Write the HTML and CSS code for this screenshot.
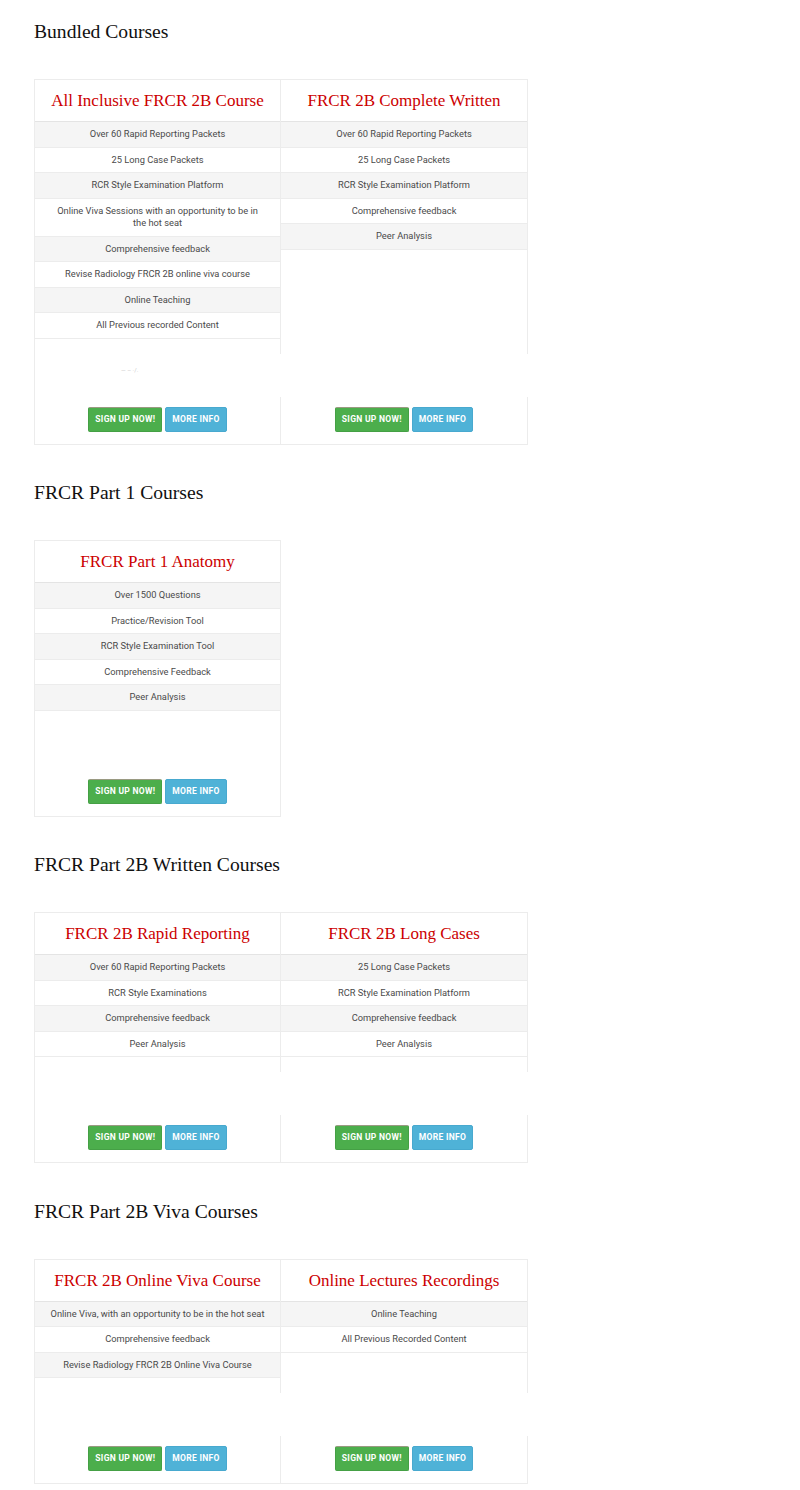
FILE: index.html
```html
<!DOCTYPE html>
<html lang="en">
<head>
  <meta charset="UTF-8">
  <meta name="viewport" content="width=device-width, initial-scale=1.0">
  <title>Courses</title>
  <link rel="stylesheet" href="styles.css">
</head>
<body>

  <div class="course-section">
    <h2>Bundled Courses</h2>
    <div class="course-grid">
      <div class="course-card">
        <h3 class="course-title">All Inclusive FRCR 2B Course</h3>
        <ul class="features">
          <li>Over 60 Rapid Reporting Packets</li>
          <li>25 Long Case Packets</li>
          <li>RCR Style Examination Platform</li>
          <li>Online Viva Sessions with an opportunity to be in the hot seat</li>
          <li>Comprehensive feedback</li>
          <li>Revise Radiology FRCR 2B online viva course</li>
          <li>Online Teaching</li>
          <li>All Previous recorded Content</li>
        </ul>
        <div class="card-footer">
          <div class="price-band"><span class="price">&mdash; &ndash; &middot;/.</span></div>
          <a href="#" class="btn btn-signup">Sign up now!</a>
          <a href="#" class="btn btn-info">More info</a>
        </div>
      </div>
      <div class="course-card">
        <h3 class="course-title">FRCR 2B Complete Written</h3>
        <ul class="features">
          <li>Over 60 Rapid Reporting Packets</li>
          <li>25 Long Case Packets</li>
          <li>RCR Style Examination Platform</li>
          <li>Comprehensive feedback</li>
          <li>Peer Analysis</li>
        </ul>
        <div class="card-footer">
          <a href="#" class="btn btn-signup">Sign up now!</a>
          <a href="#" class="btn btn-info">More info</a>
        </div>
      </div>
    </div>
  </div>

  <div class="course-section">
    <h2>FRCR Part 1 Courses</h2>
    <div class="course-grid">
      <div class="course-card">
        <h3 class="course-title">FRCR Part 1 Anatomy</h3>
        <ul class="features">
          <li>Over 1500 Questions</li>
          <li>Practice/Revision Tool</li>
          <li>RCR Style Examination Tool</li>
          <li>Comprehensive Feedback</li>
          <li>Peer Analysis</li>
        </ul>
        <div class="card-footer">
          <a href="#" class="btn btn-signup">Sign up now!</a>
          <a href="#" class="btn btn-info">More info</a>
        </div>
      </div>
    </div>
  </div>

  <div class="course-section">
    <h2>FRCR Part 2B Written Courses</h2>
    <div class="course-grid">
      <div class="course-card">
        <h3 class="course-title">FRCR 2B Rapid Reporting</h3>
        <ul class="features">
          <li>Over 60 Rapid Reporting Packets</li>
          <li>RCR Style Examinations</li>
          <li>Comprehensive feedback</li>
          <li>Peer Analysis</li>
        </ul>
        <div class="card-footer">
          <div class="price-band"></div>
          <a href="#" class="btn btn-signup">Sign up now!</a>
          <a href="#" class="btn btn-info">More info</a>
        </div>
      </div>
      <div class="course-card">
        <h3 class="course-title">FRCR 2B Long Cases</h3>
        <ul class="features">
          <li>25 Long Case Packets</li>
          <li>RCR Style Examination Platform</li>
          <li>Comprehensive feedback</li>
          <li>Peer Analysis</li>
        </ul>
        <div class="card-footer">
          <a href="#" class="btn btn-signup">Sign up now!</a>
          <a href="#" class="btn btn-info">More info</a>
        </div>
      </div>
    </div>
  </div>

  <div class="course-section">
    <h2>FRCR Part 2B Viva Courses</h2>
    <div class="course-grid">
      <div class="course-card">
        <h3 class="course-title">FRCR 2B Online Viva Course</h3>
        <ul class="features">
          <li>Online Viva, with an opportunity to be in the hot seat</li>
          <li>Comprehensive feedback</li>
          <li>Revise Radiology FRCR 2B Online Viva Course</li>
        </ul>
        <div class="card-footer">
          <div class="price-band"></div>
          <a href="#" class="btn btn-signup">Sign up now!</a>
          <a href="#" class="btn btn-info">More info</a>
        </div>
      </div>
      <div class="course-card">
        <h3 class="course-title">Online Lectures Recordings</h3>
        <ul class="features">
          <li>Online Teaching</li>
          <li>All Previous Recorded Content</li>
        </ul>
        <div class="card-footer">
          <a href="#" class="btn btn-signup">Sign up now!</a>
          <a href="#" class="btn btn-info">More info</a>
        </div>
      </div>
    </div>
  </div>

</body>
</html>
```

FILE: styles.css
```css
body {
  margin: 0;
  padding: 0 34px;
  font-family: "Liberation Serif", "Times New Roman", serif;
  color: #111;
  background: #fff;
}

h2 {
  font-weight: normal;
  font-size: 19.6px;
  line-height: 24px;
  margin: 20px 0 35px;
}

.course-section {
  margin-bottom: 36.5px;
}

.course-grid {
  display: grid;
  grid-template-columns: 247px 247px;
}

.course-card {
  display: flex;
  flex-direction: column;
  border: 1px solid #ececec;
  background: #fff;
}

.course-card + .course-card {
  border-left: none;
  width: 246px;
}

.course-title {
  margin: 0;
  height: 41px;
  line-height: 41px;
  text-align: center;
  font-weight: normal;
  font-size: 17px;
  color: #cc0000;
  border-bottom: 1px solid #e4e4e4;
  white-space: nowrap;
}

.features {
  list-style: none;
  margin: 0;
  padding: 0;
  flex: 1;
  font-family: Roboto, "Liberation Sans", sans-serif;
  font-size: 9.3px;
  color: #4a4a4a;
  text-align: center;
}

.features li {
  padding: 6px 15px;
  line-height: 12.5px;
  border-bottom: 1px solid #ececec;
}

.features li:nth-child(odd) {
  background: #f5f5f5;
}

.card-footer {
  position: relative;
  padding: 68px 0 12px;
  display: flex;
  justify-content: center;
  gap: 3px;
}

.price-band {
  position: absolute;
  top: 15px;
  left: 0;
  width: 500px;
  height: 43px;
  background: #fff;
  z-index: 1;
}

.price {
  position: absolute;
  left: 86px;
  top: 12px;
  font-family: Roboto, sans-serif;
  font-size: 6px;
  color: #c8c8c8;
}

.btn {
  display: inline-block;
  height: 23px;
  line-height: 23px;
  padding: 0 6px;
  border: 1px solid transparent;
  border-radius: 2px;
  font-family: Roboto, "Liberation Sans", sans-serif;
  font-weight: bold;
  font-size: 8.5px;
  letter-spacing: 0.3px;
  text-transform: uppercase;
  text-decoration: none;
  color: #fff;
}

.btn-signup {
  background: #4cae4c;
  border-color: #45a045;
  border-top-color: #9a9a82;
}

.btn-info {
  background: #4fb2d7;
  border-color: #48a9cf;
}
```
